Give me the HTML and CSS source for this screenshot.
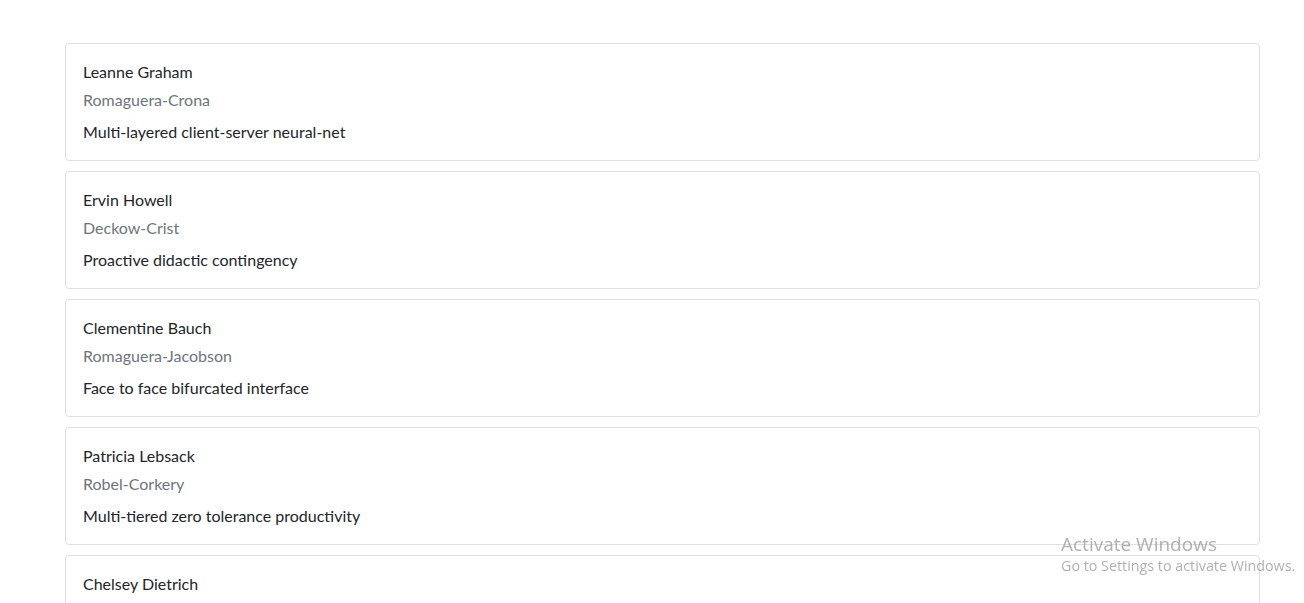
FILE: index.html
```html
<!DOCTYPE html>
<html lang="en">
<head>
<meta charset="utf-8">
<title>Users</title>
<link rel="stylesheet" href="styles.css">
</head>
<body>
<main class="list">
  <div class="card"><div class="name">Leanne Graham</div><div class="company">Romaguera-Crona</div><div class="phrase">Multi-layered client-server neural-net</div></div>
  <div class="card"><div class="name">Ervin Howell</div><div class="company">Deckow-Crist</div><div class="phrase">Proactive didactic contingency</div></div>
  <div class="card"><div class="name">Clementine Bauch</div><div class="company">Romaguera-Jacobson</div><div class="phrase">Face to face bifurcated interface</div></div>
  <div class="card"><div class="name">Patricia Lebsack</div><div class="company">Robel-Corkery</div><div class="phrase">Multi-tiered zero tolerance productivity</div></div>
  <div class="card"><div class="name">Chelsey Dietrich</div><div class="company">Keebler LLC</div><div class="phrase">User-centric fault-tolerant solution</div></div>
</main>
<div class="watermark">
  <div class="wm-title">Activate Windows</div>
  <div class="wm-sub">Go to Settings to activate Windows.</div>
</div>
</body>
</html>
```
FILE: styles.css
```css
html {
  scrollbar-width: none;
}
html::-webkit-scrollbar {
  display: none;
}
body {
  margin: 0;
  background: #fff;
  color: #212529;
  font-family: "Segoe UI", Lato, "Noto Sans", sans-serif;
  font-size: 16px;
  line-height: 24px;
}
.list {
  width: 1195px;
  margin: 43px 0 0 65px;
  display: flex;
  flex-direction: column;
  gap: 10px;
}
.card {
  border: 1px solid #dfdfdf;
  border-radius: 4px;
  padding: 16px 17px;
}
.company {
  color: #6c757d;
  margin-top: 4px;
}
.phrase {
  margin-top: 8px;
}
.watermark {
  position: fixed;
  left: 1061px;
  top: 532px;
  color: rgba(150, 150, 150, 0.75);
  font-family: "Segoe UI", "Open Sans", sans-serif;
  white-space: nowrap;
}
.wm-title {
  font-size: 19px;
  line-height: 24px;
}
.wm-sub {
  font-size: 14.3px;
  line-height: 20px;
}
```
